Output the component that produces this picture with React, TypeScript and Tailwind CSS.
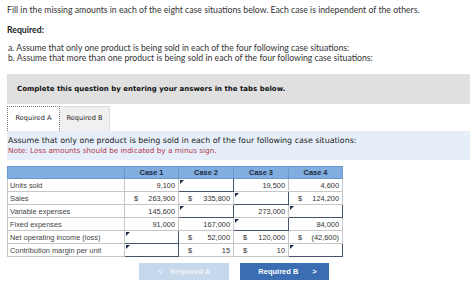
import React from 'react';

type Cell =
  | { kind: 'val'; text: string; dollar?: boolean }
  | { kind: 'input' };

interface Row {
  label: string;
  cells: Cell[];
}

const v = (text: string, dollar = false): Cell => ({ kind: 'val', text, dollar });
const inp: Cell = { kind: 'input' };

const rows: Row[] = [
  { label: 'Units sold', cells: [v('9,100'), inp, v('19,500'), v('4,600')] },
  { label: 'Sales', cells: [v('263,900', true), v('335,800', true), inp, v('124,200', true)] },
  { label: 'Variable expenses', cells: [v('145,600'), inp, v('273,000'), inp] },
  { label: 'Fixed expenses', cells: [v('91,000'), v('167,000'), inp, v('84,000')] },
  { label: 'Net operating income (loss)', cells: [inp, v('52,000', true), v('120,000', true), v('(42,600)', true)] },
  { label: 'Contribution margin per unit', cells: [inp, v('15', true), v('10', true), inp] },
];

const colWidths = ['w-[54px]', 'w-[55px]', 'w-[55px]', 'w-[54px]'];

const lato = { fontFamily: 'Lato, "Liberation Sans", sans-serif' };
const verdana = { fontFamily: '"DejaVu Sans", Verdana, sans-serif' };

function ValueCell({ cell }: { cell: Cell }) {
  if (cell.kind === 'input') {
    return (
      <td className="relative h-[13px] border border-[#46546a] bg-white p-0">
        <span className="absolute left-[1px] top-[1px] h-0 w-0 border-b-[2px] border-l-[2px] border-r-[2px] border-t-[2px] border-b-transparent border-l-[#1d2c48] border-r-transparent border-t-[#1d2c48]" />
      </td>
    );
  }
  return (
    <td className="h-[13px] border border-[#c6c6c6] bg-white px-[3px] py-0">
      <div className="flex justify-between">
        <span className="pl-[6px]">{cell.dollar ? '$' : ''}</span>
        <span>{cell.text}</span>
      </div>
    </td>
  );
}

export default function App() {
  return (
    <div className="h-[296px] w-[474px] overflow-hidden bg-white pl-[7px] pr-[4px] text-[#333]" style={{ fontFamily: '"Liberation Sans", Arial, sans-serif' }}>
      <p className="pt-[4px] text-[8.7px] leading-[12px]" style={lato}>
        Fill in the missing amounts in each of the eight case situations below. Each case is independent of the others.
      </p>
      <p className="mt-[8px] text-[8.7px] font-bold leading-[12px] text-[#222]" style={lato}>
        Required:
      </p>
      <div className="mt-[7px] pl-[1px] text-[8.7px] leading-[10px]" style={lato}>
        <p>a. Assume that only one product is being sold in each of the four following case situations:</p>
        <p>b. Assume that more than one product is being sold in each of the four following case situations:</p>
      </div>

      <div className="mt-[11px] flex h-[30px] items-center bg-[#e0e0e0] pl-[10px]">
        <p className="text-[7px] font-bold text-[#111]" style={verdana}>
          Complete this question by entering your answers in the tabs below.
        </p>
      </div>

      <div className="mt-[2px] flex h-[25px] text-[6.6px] text-[#222]" style={verdana}>
        <div className="flex w-[53px] items-center justify-center border border-b-0 border-dotted border-[#777] bg-white">
          Required A
        </div>
        <div className="flex w-[50px] items-center justify-center border-r border-t border-[#ddd] bg-[#f0f0f0]">
          Required B
        </div>
      </div>

      <div className="flex h-[29px] flex-col justify-center bg-[#e6eff9] pl-[1px] text-[7.9px] leading-[10px]" style={verdana}>
        <p className="text-[#222]">Assume that only one product is being sold in each of the four following case situations:</p>
        <p className="text-[7.3px] text-[#b0384b]">Note: Loss amounts should be indicated by a minus sign.</p>
      </div>

      <table className="mt-[6px] border-collapse text-[7.4px] leading-[11px] text-[#333]">
        <thead>
          <tr className="h-[12px] bg-[#82addf]">
            <th className="w-[117px] border border-[#6b98cf]" />
            {['Case 1', 'Case 2', 'Case 3', 'Case 4'].map((c, i) => (
              <th key={c} className={`${colWidths[i]} border border-[#6b98cf] text-center font-bold text-[#1b2a40]`}>
                {c}
              </th>
            ))}
          </tr>
        </thead>
        <tbody>
          {rows.map((r) => (
            <tr key={r.label}>
              <td className="h-[13px] border border-[#c6c6c6] bg-white px-[2px] py-0 text-left text-[#444]">{r.label}</td>
              {r.cells.map((c, i) => (
                <ValueCell key={i} cell={c} />
              ))}
            </tr>
          ))}
        </tbody>
      </table>

      <div className="mt-[6px] flex gap-[11px] pl-[132px]">
        <button className="flex h-[17px] w-[90px] items-center justify-center gap-[8px] bg-[#c6d8ec] text-[7.5px] font-bold text-[#eef3f9]">
          <span>&lt;</span>
          <span>Required A</span>
        </button>
        <button className="flex h-[17px] w-[89px] items-center justify-center gap-[14px] bg-[#3b6db3] pl-[6px] text-[7.5px] font-bold text-white">
          <span>Required B</span>
          <span>&gt;</span>
        </button>
      </div>
    </div>
  );
}
